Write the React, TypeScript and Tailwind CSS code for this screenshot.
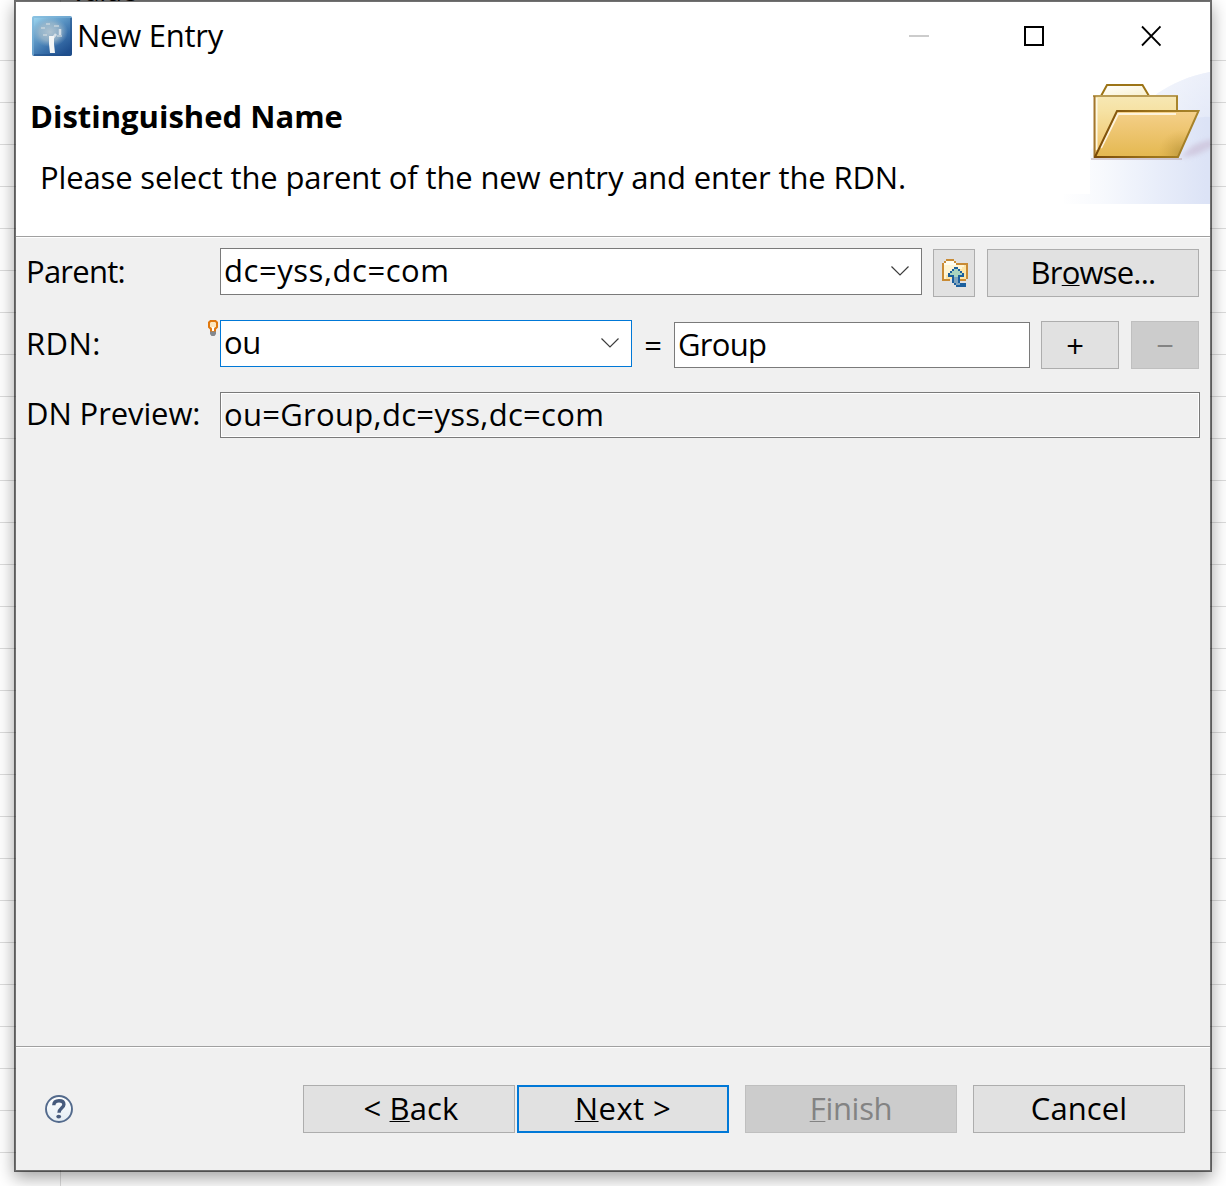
import React from "react";

const PALETTE: Record<string, string> = {
  o: "#c98b35",
  w: "#fffdf0",
  y: "#fde5a8",
  l: "#fff5d5",
  b: "#1b5f9e",
  g: "#a9d3bf",
  s: "#7fa3bd",
};

const FOLDER_UP = [
  "..oooo.......",
  ".owwwwo......",
  "owwwwwwoooooo",
  "ollllllllllyo",
  "olllllbbllyyo",
  "ollllbggbyyyo",
  "olllbggggbyyo",
  "ollbggggggbyo",
  "olybbbggbbbyo",
  "olyyybssbyyyo",
  "oooo.bssbooo.",
  ".....bssb....",
  "......bssbbb.",
  ".......bbbbb.",
];

function FolderUpIcon() {
  return (
    <svg width="26" height="28" viewBox="0 0 13 14" shapeRendering="crispEdges">
      {FOLDER_UP.flatMap((row, y) =>
        row.split("").map((c, x) =>
          c === "." ? null : <rect key={`${x}-${y}`} x={x} y={y} width="1" height="1" fill={PALETTE[c]} />,
        ),
      )}
    </svg>
  );
}

function AppIcon() {
  return (
    <svg width="40" height="40" viewBox="0 0 40 40" className="shrink-0">
      <defs>
        <linearGradient id="app" x1="0" y1="0" x2="0.75" y2="1">
          <stop offset="0" stopColor="#a5dcf3" />
          <stop offset="0.35" stopColor="#6aa5cf" />
          <stop offset="0.7" stopColor="#3a71ab" />
          <stop offset="1" stopColor="#1f4f8e" />
        </linearGradient>
        <radialGradient id="crown">
          <stop offset="0" stopColor="#b4c6d2" stopOpacity="0.95" />
          <stop offset="0.6" stopColor="#9db7c9" stopOpacity="0.75" />
          <stop offset="1" stopColor="#7fa6c6" stopOpacity="0" />
        </radialGradient>
        <filter id="blur">
          <feGaussianBlur stdDeviation="0.7" />
        </filter>
      </defs>
      <rect width="40" height="40" rx="2" fill="url(#app)" />
      <path d="M1 39V2L2 1h37" fill="none" stroke="#7db4d8" strokeWidth="2" opacity="0.6" />
      <path d="M39 2v36l-1 1H2" fill="none" stroke="#1d4b86" strokeWidth="2" opacity="0.5" />
      <ellipse cx="18" cy="16" rx="18" ry="15" fill="url(#crown)" />
      <g filter="url(#blur)">
        <path d="M9 12h4M14 8h4M22 10h5M11 19h4M25 20h5" stroke="#d3dde2" strokeWidth="2" opacity="0.6" />
        <path d="M28 13v6M24 18l-3 4" stroke="#e6ecef" strokeWidth="2.500" opacity="0.8" />
        <path d="M17 20h5v8l1 9h-5l-1-9z" fill="#f4f6f6" />
      </g>
    </svg>
  );
}

function WizardBanner() {
  return (
    <svg width="150" height="132" viewBox="1060 72 150 132" className="absolute right-0 top-[70px]">
      <defs>
        <linearGradient id="sky" gradientUnits="userSpaceOnUse" x1="1060" y1="0" x2="1206" y2="0">
          <stop offset="0" stopColor="#ffffff" />
          <stop offset="0.3" stopColor="#f7f9fd" />
          <stop offset="0.65" stopColor="#e9eefa" />
          <stop offset="1" stopColor="#dce3f6" />
        </linearGradient>
        <linearGradient id="haze" x1="0" y1="0" x2="0" y2="1">
          <stop offset="0" stopColor="#ffffff" stopOpacity="0.45" />
          <stop offset="1" stopColor="#ffffff" stopOpacity="0.25" />
        </linearGradient>
        <linearGradient id="back" x1="0" y1="0" x2="0" y2="1">
          <stop offset="0" stopColor="#f7ecc0" />
          <stop offset="0.35" stopColor="#f6e2a4" />
          <stop offset="1" stopColor="#f0c062" />
        </linearGradient>
        <linearGradient id="front" x1="0" y1="0" x2="0" y2="1">
          <stop offset="0" stopColor="#f5d08a" />
          <stop offset="1" stopColor="#e4b850" />
        </linearGradient>
        <linearGradient id="edge" x1="0" y1="0" x2="1" y2="0">
          <stop offset="0" stopColor="#7a4a08" />
          <stop offset="0.5" stopColor="#9a7018" />
          <stop offset="1" stopColor="#a8852c" />
        </linearGradient>
        <linearGradient id="tab" x1="0" y1="0" x2="1" y2="1">
          <stop offset="0" stopColor="#ffffff" />
          <stop offset="1" stopColor="#f8f0cc" />
        </linearGradient>
        <radialGradient id="corner" gradientUnits="userSpaceOnUse" cx="1182" cy="154" r="24">
          <stop offset="0" stopColor="#a28432" stopOpacity="0.6" />
          <stop offset="1" stopColor="#c79a3c" stopOpacity="0" />
        </radialGradient>
        <filter id="soft" x="-30%" y="-60%" width="160%" height="220%">
          <feGaussianBlur stdDeviation="2.500" />
        </filter>
      </defs>
      <path d="M1210 72C1188 76 1172 84 1158 93L1120 130L1090 150V194H1064V204H1210Z" fill="url(#sky)" />
      <path d="M1210 72C1188 76 1172 84 1158 93L1140 120H1190Q1200 116 1210 117Z" fill="url(#haze)" />
      <path d="M1180 158L1192 146Q1202 141 1214 139V146L1196 155Z" fill="#c9bcd4" opacity="0.65" filter="url(#soft)" />
      <path d="M1091 159H1182" stroke="#bcaab0" strokeWidth="2" opacity="0.55" />
      <path d="M1094 157V96H1101L1107 85.500H1142L1149 96H1177V157Z" fill="url(#back)" />
      <path d="M1101 96L1107 85.500H1142L1149 96Z" fill="url(#tab)" />
      <path d="M1096.500 150V98" stroke="#fdf8e4" strokeWidth="2" />
      <path d="M1101 96L1107 85H1142.500L1149 96" fill="none" stroke="#9c7416" strokeWidth="2" />
      <path d="M1093 96H1178" stroke="#b99c55" strokeWidth="2" />
      <path d="M1094.500 157V96" stroke="#a3762e" strokeWidth="2" />
      <path d="M1177 96V111" stroke="#a8852c" strokeWidth="2" />
      <path d="M1095 157L1117 111H1198.500L1178 157Z" fill="url(#front)" />
      <path d="M1095 157L1117 111H1198.500L1178 157Z" fill="url(#corner)" />
      <path d="M1101 148L1118 114H1176" fill="none" stroke="#fff6e4" strokeWidth="2" opacity="0.9" />
      <path d="M1095 157L1117 111H1198.500L1178 157Z" fill="none" stroke="url(#edge)" strokeWidth="2" />
    </svg>
  );
}

function Chevron() {
  return (
    <svg width="18" height="10" viewBox="0 0 18 10" className="mt-[-1px] shrink-0">
      <path d="M0.500 0.500L9 9L17.500 0.500" fill="none" stroke="#3c3c3c" strokeWidth="1.200" />
    </svg>
  );
}

function BulbIcon() {
  return (
    <svg width="10" height="16" viewBox="0 0 10 16" className="absolute left-[192px] top-0">
      <path d="M2.500 1h5L9 2.500v4.500L7 9v2.500H3V9L1 7V2.500Z" fill="#fde6bd" stroke="#e0780e" strokeWidth="2" />
      <path d="M4 7h2v4H4z" fill="#fff" />
      <path d="M2 11.500h6V14L6.500 16h-3L2 14Z" fill="#84898f" />
    </svg>
  );
}

function HelpIcon() {
  return (
    <svg width="28" height="28" viewBox="0 0 28 28">
      <defs>
        <linearGradient id="help" x1="0" y1="0" x2="0" y2="1">
          <stop offset="0" stopColor="#ffffff" />
          <stop offset="1" stopColor="#e2ecf3" />
        </linearGradient>
      </defs>
      <circle cx="14" cy="14" r="13" fill="url(#help)" stroke="#536a8c" strokeWidth="1.900" />
      <path
        d="M8.800 10.300C8.900 7 11 5.800 14 5.800C17.200 5.800 18.900 7.300 18.900 9.500C18.900 13 14 13.300 14 17.800"
        fill="none"
        stroke="#465b7d"
        strokeWidth="3.400"
      />
      <ellipse cx="13.700" cy="21.600" rx="2.400" ry="1.900" fill="#465b7d" />
    </svg>
  );
}

/** Underlined access-key letter. */
function Key({ children }: { children: React.ReactNode }) {
  return <span className="underline decoration-1 underline-offset-[1px] [text-decoration-skip-ink:none]">{children}</span>;
}

const BUTTON = "flex h-12 shrink-0 justify-center border border-[#adadad] bg-[#e1e1e1] leading-[44px]";
const DISABLED = "flex h-12 shrink-0 justify-center border border-[#bfbfbf] bg-[#cccccc] leading-[44px] text-[#838383]";

export default function App() {
  return (
    <div className="relative h-[1186px] w-[1226px] overflow-hidden bg-white bg-[linear-gradient(to_bottom,#fff_0_42px,transparent_42px),repeating-linear-gradient(to_bottom,transparent_0_18px,#dcdcdc_18px_19px,transparent_19px_42px)] pl-[14px] font-['Open_Sans',sans-serif] text-[31px] text-black whitespace-pre">
      <div className="absolute left-[60px] top-0 h-full w-px bg-[#dcdcdc]" />
      <div className="absolute left-[72px] top-[-29px] text-[26px] leading-[40px]">value</div>

      <div className="relative flex h-[1172px] w-[1198px] flex-col border-2 border-black/56 bg-[#f0f0f0] bg-clip-padding shadow-[0_6px_16px_rgba(0,0,0,0.36)]">
        <header className="relative h-[234px] shrink-0 bg-white">
          <WizardBanner />
          <div className="flex h-[66px] items-center pl-4">
            <div className="h-[38px]">
              <AppIcon />
            </div>
            <span className="ml-[5px] mt-px flex-1 tracking-[-0.25px]">New Entry</span>
            <svg width="252" height="22" viewBox="0 0 252 22" className="mr-[49px] mt-[2px] shrink-0">
              <path d="M0 11h20" stroke="#cccccc" strokeWidth="2" />
              <rect x="116" y="2" width="18" height="18" fill="none" stroke="#000" strokeWidth="2" />
              <path d="M233 1.500L251.500 20.500M251.500 1.500L233 20.500" stroke="#000" strokeWidth="1.800" />
            </svg>
          </div>
          <h1 className="mt-[24px] pl-[14px] font-bold leading-[48px]">Distinguished Name</h1>
          <p className="mt-[13px] pl-6 leading-[48px] tracking-[-0.15px]">
            Please select the parent of the new entry and enter the RDN.
          </p>
        </header>
        <div className="h-[2px] shrink-0 border-t border-[#a0a0a0] bg-white" />

        <main className="flex flex-1 flex-col pt-[10px] leading-[46px]">
          <div className="flex h-[72px] items-start pl-[10px]">
            <label className="w-[194px] tracking-[-0.75px]">Parent:</label>
            <div className="flex h-[47px] w-[702px] items-center border border-[#7a7a7a] bg-white pl-[3px] pr-3">
              <span className="mt-[-3px] flex-1 tracking-[0.55px]">dc=yss,dc=com</span>
              <Chevron />
            </div>
            <div className="ml-[11px] mt-px flex h-12 w-[42px] justify-center border border-[#adadad] bg-[#e1e1e1] pl-[2px] pt-[9px]">
              <FolderUpIcon />
            </div>
            <div className={`${BUTTON} ml-3 mt-px w-[212px] tracking-[-0.8px]`}>
              Br<Key>o</Key>wse...
            </div>
          </div>

          <div className="relative flex h-[72px] items-start pl-[10px]">
            <BulbIcon />
            <label className="w-[194px] tracking-[0.4px]">RDN:</label>
            <div className="flex h-[47px] w-[412px] items-center border border-[#0078d7] bg-white pl-[3px] pr-3">
              <span className="mt-[-3px] flex-1 tracking-[-0.5px]">ou</span>
              <Chevron />
            </div>
            <span className="w-[42px] text-center leading-[50px]">=</span>
            <div className="mt-[2px] h-[46px] w-[356px] border border-[#7a7a7a] bg-white pl-[3px] leading-[42px] tracking-[-0.7px]">
              Group
            </div>
            <div className={`${BUTTON} ml-[11px] mt-px w-[78px] pr-[10px] pt-[2px]`}>+</div>
            <div className={`${DISABLED} ml-3 mt-px w-[68px] pt-px`}>−</div>
          </div>

          <div className="flex items-start pl-[10px]">
            <label className="w-[194px] leading-[42px] tracking-[-0.1px]">DN Preview:</label>
            <div className="h-[46px] w-[980px] border border-[#7a7a7a] pl-[3px] leading-[42px] tracking-[0.3px] shadow-[inset_0_0_0_1px_#fff]">
              ou=Group,dc=yss,dc=com
            </div>
          </div>
        </main>

        <footer className="flex h-[124px] shrink-0 border-t border-[#a0a0a0] pt-[38px] shadow-[inset_0_1px_0_#fff]">
          <div className="ml-[29px] mr-[230px] pt-[10px]">
            <HelpIcon />
          </div>
          <div className={`${BUTTON} w-[212px] pl-1 tracking-[0.15px]`}>
            {"< "}
            <Key>B</Key>ack
          </div>
          <div className="ml-[2px] flex h-12 w-[212px] justify-center border-2 border-[#0078d7] bg-[#e1e1e1] leading-[42px] tracking-[0.45px]">
            <Key>N</Key>
            {"ext >"}
          </div>
          <div className={`${DISABLED} ml-4 w-[212px] tracking-[-0.3px]`}>
            <Key>F</Key>inish
          </div>
          <div className={`${BUTTON} ml-4 w-[212px] tracking-[0.1px]`}>Cancel</div>
        </footer>
      </div>
    </div>
  );
}
